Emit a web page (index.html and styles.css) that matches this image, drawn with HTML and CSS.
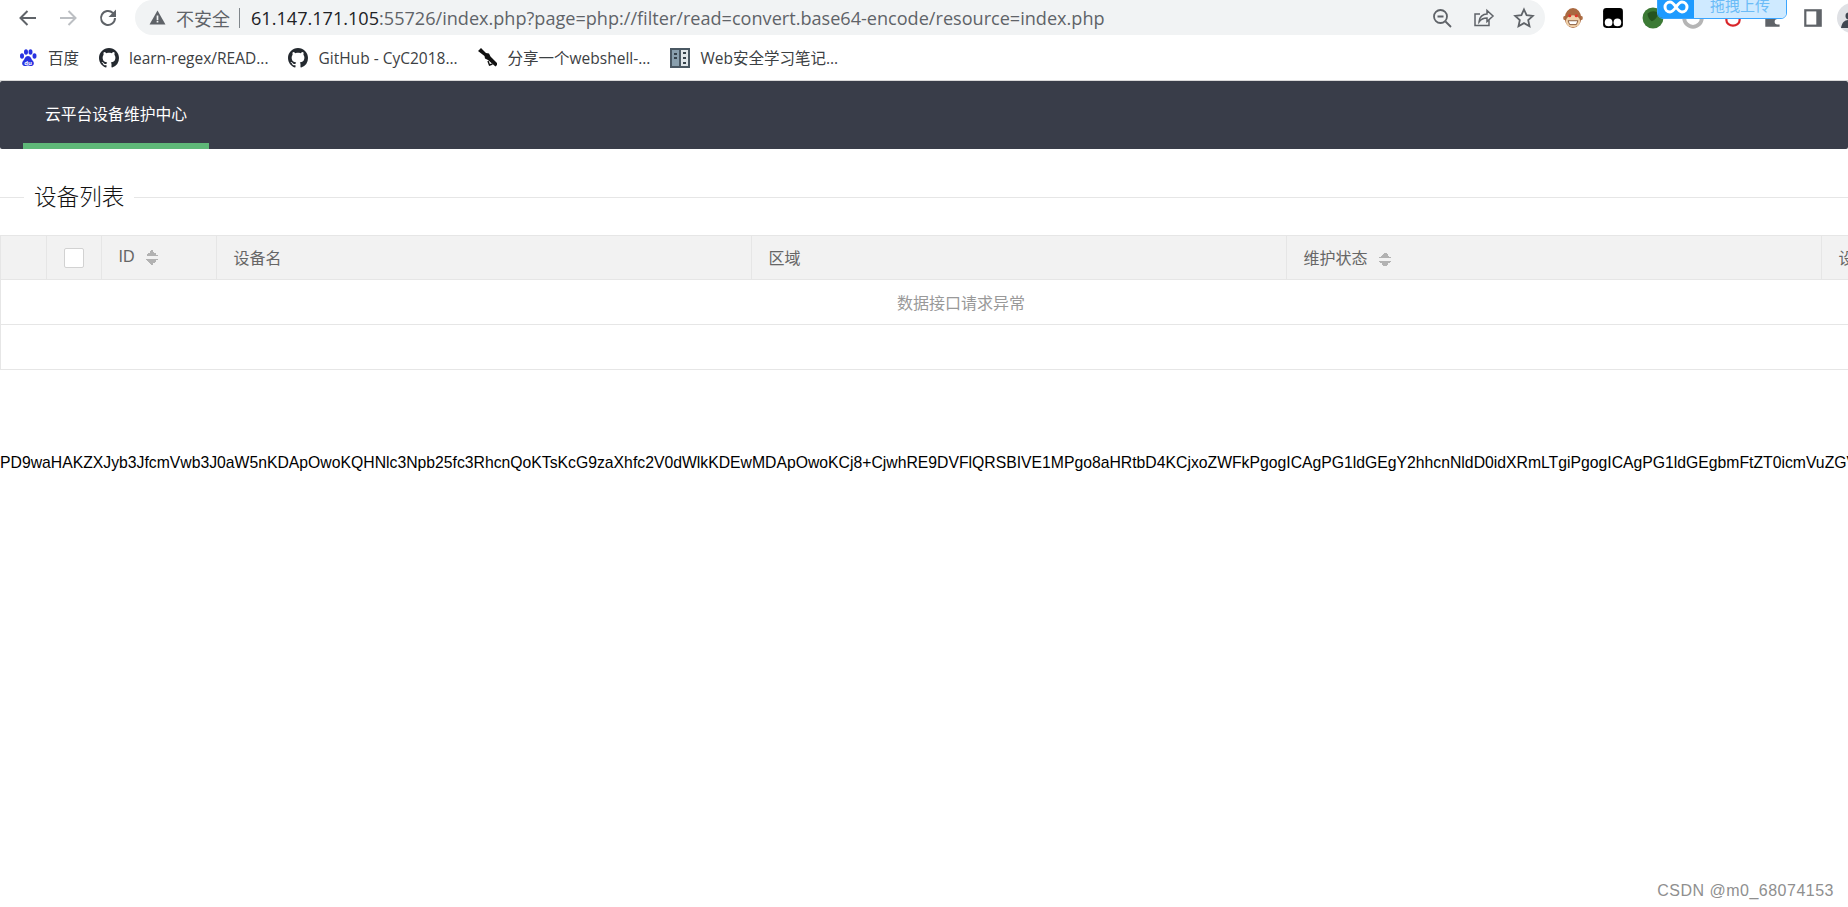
FILE: index.html
```html
<!DOCTYPE html>
<html>
<head>
    <title>云平台设备维护中心</title>
    <link rel="stylesheet" href="styles.css">
</head>
<body>
    <div class="browser-top">
        <div class="toolbar">
            <div class="nav-buttons">
                <svg class="nav-icon" viewBox="0 0 24 24"><path d="M20 12H5M11.5 5 4.5 12l7 7" fill="none" stroke="#5f6368" stroke-width="2"/></svg>
                <svg class="nav-icon" viewBox="0 0 24 24"><path d="M4 12h15M12.5 5l7 7-7 7" fill="none" stroke="#bcbfc3" stroke-width="2"/></svg>
                <svg class="nav-icon" viewBox="0 0 24 24"><path d="M19 12a7 7 0 1 1-2.100-5L19.500 9.500" fill="none" stroke="#5f6368" stroke-width="2"/><path d="M20 3.500V11h-7.500z" fill="#5f6368"/></svg>
            </div>
            <div class="address-bar">
                <svg class="warn-icon" viewBox="0 0 16 16"><path d="M8 1.500 15.500 14.500H.5z" fill="#5f6368"/><path d="M7.200 6h1.600v4.500H7.200zM7.200 11.300h1.600v1.500H7.200z" fill="#f1f3f4"/></svg>
                <span class="not-secure">不安全</span>
                <span class="addr-sep"></span>
                <span class="url"><b>61.147.171.105</b>:55726/index.php?page=php://filter/read=convert.base64-encode/resource=index.php</span>
                <div class="addr-icons">
                    <svg class="addr-icon" viewBox="0 0 24 24"><circle cx="10.500" cy="10.500" r="6.500" fill="none" stroke="#5f6368" stroke-width="1.800"/><path d="M7.500 10.500h6M15.500 15.500l5.500 5.500" stroke="#5f6368" stroke-width="1.800"/></svg>
                    <svg class="addr-icon" viewBox="0 0 24 24"><path d="M18 13v6.500H4V8h5M8 16c0-5 4-8 8-8V4.500L22 10l-6 5.500V12c-3 0-6 1-8 4z" fill="none" stroke="#5f6368" stroke-width="1.500"/></svg>
                    <svg class="addr-icon" viewBox="0 0 24 24"><path d="m12 3.500 2.600 5.700 6.200.7-4.600 4.200 1.300 6.100L12 17.100l-5.500 3.100 1.300-6.100-4.600-4.200 6.200-.7z" fill="none" stroke="#5f6368" stroke-width="1.800"/></svg>
                </div>
            </div>
            <div class="extensions">
                <svg class="ext" viewBox="0 0 20 20"><circle cx="3" cy="10" r="2" fill="#b0734a"/><circle cx="17" cy="10" r="2" fill="#b0734a"/><ellipse cx="10" cy="10" rx="7.500" ry="9" fill="#a9683f"/><ellipse cx="10" cy="13" rx="6.500" ry="5.500" fill="#f0d0a8"/><circle cx="7" cy="8" r="1.400" fill="#e0352b"/><circle cx="13" cy="8" r="1.400" fill="#e0352b"/><path d="M5.500 12.500h9l-1.500 3.500H7z" fill="#fff" stroke="#6b3a1c" stroke-width=".7"/></svg>
                <svg class="ext" viewBox="0 0 20 20"><rect x="1" y="1" width="18" height="18" rx="3" fill="#000"/><circle cx="6" cy="14" r="3.500" fill="#fff"/><circle cx="14" cy="14" r="3.500" fill="#fff"/></svg>
                <svg class="ext" viewBox="0 0 20 20"><circle cx="10" cy="10" r="9.500" fill="#3c7a35"/><path d="M5 6c3-3 8-3 10 0-1 3-3 6-6 7-2-1-4-4-4-7z" fill="#25541f"/></svg>
                <svg class="ext" viewBox="0 0 20 20"><circle cx="10" cy="10" r="8" fill="none" stroke="#b5b5b5" stroke-width="3.500"/></svg>
                <svg class="ext" viewBox="0 0 20 20"><path d="M4 7v5c0 3 3 5 6 5s6-2 6-5V7z" fill="none" stroke="#d9252a" stroke-width="2"/></svg>
                <svg class="ext" viewBox="0 0 20 20"><path d="M3 7h4V5a2.500 2.500 0 0 1 5 0v2h4v4h-2a2.500 2.500 0 0 0 0 5h2v2H3z" fill="#5f6368"/></svg>
                <svg class="ext" viewBox="0 0 20 20"><rect x="2" y="2" width="16" height="16" fill="#5f6368"/><rect x="4" y="4" width="9" height="12" fill="#fff"/></svg>
                <svg class="avatar" viewBox="0 0 30 30"><circle cx="15" cy="15" r="15" fill="#dfe1e5"/><circle cx="12" cy="13" r="3.500" fill="#3f4650"/><path d="M4 25c1-6 4-8 8-8s7 2 8 8z" fill="#3f4650"/></svg>
            </div>
        </div>
        <div class="bookmarks">
            <div class="bookmark">
                <svg class="bm-icon" viewBox="0 0 20 20"><g fill="#2932e1"><ellipse cx="4" cy="8" rx="2" ry="2.800"/><ellipse cx="8" cy="4" rx="2" ry="2.800"/><ellipse cx="12.500" cy="4" rx="2" ry="2.800"/><ellipse cx="16.500" cy="8" rx="2" ry="2.800"/><path d="M10 8c3 0 3 3 5 5 2 3 0 5-2 5-1.500 0-2-.5-3-.5s-1.500.5-3 .5c-2 0-4-2-2-5 2-2 2-5 5-5z"/></g><text x="10" y="16.500" class="du">du</text></svg>
                <span>百度</span>
            </div>
            <div class="bookmark">
                <svg class="bm-icon" viewBox="0 0 16 16"><path fill="#24292f" d="M8 0C3.580 0 0 3.580 0 8c0 3.540 2.290 6.530 5.470 7.590.4.070.55-.17.55-.38 0-.19-.01-.82-.01-1.490-2.010.37-2.530-.49-2.690-.94-.09-.23-.48-.94-.82-1.130-.28-.15-.68-.52-.01-.53.630-.01 1.080.58 1.230.82.720 1.210 1.870.87 2.330.66.070-.52.280-.87.510-1.070-1.780-.2-3.640-.89-3.640-3.950 0-.87.310-1.590.820-2.150-.08-.2-.36-1.020.08-2.120 0 0 .67-.21 2.200.82.640-.18 1.320-.27 2-.27s1.360.09 2 .27c1.530-1.040 2.200-.82 2.200-.82.440 1.100.16 1.920.08 2.120.51.560.82 1.270.82 2.150 0 3.070-1.870 3.750-3.650 3.950.290.25.540.73.540 1.480 0 1.070-.01 1.930-.01 2.200 0 .21.150.46.550.38A8.010 8.010 0 0 0 16 8c0-4.420-3.580-8-8-8z"/></svg>
                <span>learn-regex/READ...</span>
            </div>
            <div class="bookmark">
                <svg class="bm-icon" viewBox="0 0 16 16"><path fill="#24292f" d="M8 0C3.580 0 0 3.580 0 8c0 3.540 2.290 6.530 5.470 7.590.4.070.55-.17.55-.38 0-.19-.01-.82-.01-1.490-2.010.37-2.530-.49-2.690-.94-.09-.23-.48-.94-.82-1.130-.28-.15-.68-.52-.01-.53.630-.01 1.080.58 1.230.82.720 1.210 1.870.87 2.330.66.070-.52.280-.87.510-1.070-1.780-.2-3.640-.89-3.640-3.950 0-.87.310-1.590.820-2.150-.08-.2-.36-1.020.08-2.120 0 0 .67-.21 2.200.82.640-.18 1.320-.27 2-.27s1.360.09 2 .27c1.530-1.040 2.200-.82 2.200-.82.440 1.100.16 1.920.08 2.120.51.560.82 1.270.82 2.150 0 3.070-1.870 3.750-3.650 3.950.290.25.540.73.540 1.480 0 1.070-.01 1.930-.01 2.200 0 .21.150.46.550.38A8.010 8.010 0 0 0 16 8c0-4.420-3.580-8-8-8z"/></svg>
                <span>GitHub - CyC2018...</span>
            </div>
            <div class="bookmark">
                <svg class="bm-icon" viewBox="0 0 20 20"><path d="M0 3l3-3 5 5 3 .5 1.500 3L19 15v2l-1.500 1.500L10 12 7 10.500 6.500 8z" fill="#111"/><path d="M10 13l1.500 4 3-1" fill="none" stroke="#111" stroke-width="1.400"/></svg>
                <span>分享一个webshell-...</span>
            </div>
            <div class="bookmark">
                <svg class="bm-icon" viewBox="0 0 20 20"><rect width="20" height="20" fill="#4a5863"/><rect x="2" y="2" width="7" height="16" fill="#8aa0ae"/><rect x="11" y="2" width="7" height="16" fill="#dfe5e9"/><path d="M4 5h3v2H4zM4 9h3v2H4zM13 4h3v2h-3zM13 9h3v2h-3zM13 14h3v2h-3z" fill="#37434c"/></svg>
                <span>Web安全学习笔记...</span>
            </div>
        </div>
    </div>

    <div class="upload-widget">
        <div class="upload-logo">
            <svg viewBox="0 0 30 16" width="30" height="16"><path d="M9 3a5 5 0 1 0 0 10c5 0 7-10 12-10a5 5 0 1 1 0 10C16 13 14 3 9 3z" fill="none" stroke="#fff" stroke-width="3"/></svg>
        </div>
        <div class="upload-text">拖拽上传</div>
    </div>

    <div class="header">
        <div class="header-tab">云平台设备维护中心</div>
    </div>

    <div class="content">
        <div class="legend-row">
            <span class="legend-title">设备列表</span>
        </div>

        <table class="device-table">
            <colgroup>
                <col class="col-num">
                <col class="col-check">
                <col class="col-id">
                <col class="col-wide">
                <col class="col-wide">
                <col class="col-wide">
                <col>
            </colgroup>
            <thead>
                <tr>
                    <th></th>
                    <th class="check-cell"><span class="checkbox"></span></th>
                    <th>ID<span class="sort"></span></th>
                    <th>设备名</th>
                    <th>区域</th>
                    <th>维护状态<span class="sort"></span></th>
                    <th>设备</th>
                </tr>
            </thead>
            <tbody>
                <tr>
                    <td colspan="7" class="none">数据接口请求异常</td>
                </tr>
                <tr>
                    <td colspan="7"></td>
                </tr>
            </tbody>
        </table>

        <div class="dump">PD9waHAKZXJyb3JfcmVwb3J0aW5nKDApOwoKQHNlc3Npb25fc3RhcnQoKTsKcG9zaXhfc2V0dWlkKDEwMDApOwoKCj8+CjwhRE9DVFlQRSBIVE1MPgo8aHRtbD4KCjxoZWFkPgogICAgPG1ldGEgY2hhcnNldD0idXRmLTgiPgogICAgPG1ldGEgbmFtZT0icmVuZGVyZXIiIGNvbnRlbnQ9</div>
    </div>

    <div class="watermark">CSDN @m0_68074153</div>
</body>
</html>
```

FILE: styles.css
```css
html, body {
    height: 100%;
}
body {
    margin: 0;
    background: #fff;
    color: #000;
    font-family: "Liberation Sans", "Noto Sans CJK SC", sans-serif;
    overflow: hidden;
}

/* browser toolbar */
.browser-top {
    height: 80px;
    border-bottom: 1px solid #d9d9d9;
}
.toolbar {
    display: flex;
    align-items: center;
    height: 35px;
}
.nav-buttons {
    display: flex;
    flex: none;
    gap: 16px;
    width: 135px;
    padding-left: 16px;
    box-sizing: border-box;
}
.nav-icon {
    width: 24px;
    height: 24px;
}
.address-bar {
    display: flex;
    flex: none;
    align-items: center;
    width: 1410px;
    height: 35px;
    background: #f1f3f4;
    border-radius: 18px;
    padding-left: 14px;
    box-sizing: border-box;
}
.warn-icon {
    width: 17px;
    height: 17px;
    margin-right: 10px;
}
.not-secure {
    font-size: 18px;
    color: #5f6368;
}
.addr-sep {
    width: 1px;
    height: 20px;
    background: #80868b;
    margin: 0 11px 0 9px;
}
.url {
    font-family: "Open Sans", sans-serif;
    font-size: 18.1px;
    color: #5f6368;
    white-space: nowrap;
}
.url b {
    font-weight: 400;
    color: #202124;
}
.addr-icons {
    display: flex;
    gap: 17px;
    margin-left: auto;
    padding-right: 9px;
}
.addr-icon {
    width: 24px;
    height: 24px;
}
.extensions {
    display: flex;
    align-items: center;
    gap: 18px;
    padding-left: 17px;
    flex: none;
}
.ext {
    width: 22px;
    height: 22px;
    flex: none;
}
.avatar {
    width: 30px;
    height: 30px;
    margin-left: -5px;
    flex: none;
}
.bookmarks {
    display: flex;
    align-items: center;
    height: 45px;
    padding-left: 18px;
    gap: 20px;
}
.bookmark {
    display: flex;
    align-items: center;
    gap: 10px;
    font-family: "Open Sans", "Noto Sans CJK SC", sans-serif;
    font-size: 15.5px;
    color: #3c4043;
    white-space: nowrap;
}
.bm-icon {
    width: 20px;
    height: 20px;
}
.du {
    font-size: 6px;
    font-weight: 700;
    fill: #fff;
    text-anchor: middle;
}

.upload-widget {
    position: absolute;
    left: 1657px;
    top: -5px;
    width: 130px;
    height: 24px;
    display: flex;
    border: 1px solid #3aa5ff;
    border-radius: 0 0 6px 6px;
    overflow: hidden;
    box-sizing: border-box;
}
.upload-logo {
    width: 36px;
    background: #1e9bff;
    display: flex;
    align-items: center;
    justify-content: center;
}
.upload-text {
    flex: 1;
    background: #cfeaff;
    color: #6cbcf7;
    font-size: 15px;
    text-align: center;
    line-height: 20px;
}

/* page */
.header {
    height: 68px;
    background: #393d49;
    border-radius: 2px;
    padding-left: 23px;
}
.header-tab {
    width: 186px;
    height: 68px;
    box-sizing: border-box;
    border-bottom: 6px solid #5fb878;
    color: #fff;
    font-size: 15.8px;
    line-height: 68px;
    text-align: center;
}
.content {
    width: 1922px;
}
.legend-row {
    display: flex;
    align-items: center;
    height: 60px;
    padding-top: 18px;
    margin-bottom: 8px;
}
.legend-row::before {
    content: "";
    width: 24px;
    border-top: 1px solid #e6e6e6;
}
.legend-row::after {
    content: "";
    flex: 1;
    border-top: 1px solid #e6e6e6;
}
.legend-title {
    font-size: 22.6px;
    line-height: 26px;
    font-weight: 300;
    padding: 0 10px;
    margin-top: 2px;
    color: #111;
}
.device-table {
    width: 1922px;
    table-layout: fixed;
    border-collapse: collapse;
    font-size: 16px;
    color: #666;
}
.col-num { width: 46px; }
.col-check { width: 55px; }
.col-id { width: 115px; }
.col-wide { width: 535px; }
.device-table th,
.device-table td {
    border: 1px solid #e6e6e6;
    height: 44px;
    padding: 0 16.5px;
    font-weight: 400;
    text-align: left;
    box-sizing: border-box;
}
.device-table th {
    background: #f2f2f2;
    padding-bottom: 2px;
}
.device-table td {
    height: 45px;
}
.device-table .check-cell {
    padding: 0;
    text-align: center;
}
.checkbox {
    display: inline-block;
    width: 20px;
    height: 20px;
    background: #fff;
    border: 1px solid #d2d2d2;
    border-radius: 2px;
    box-sizing: border-box;
    vertical-align: middle;
}
.sort {
    display: inline-block;
    width: 12px;
    height: 15px;
    margin-left: 11px;
    vertical-align: middle;
    background:
        linear-gradient(to top left, #b2b2b2 50%, transparent 50%) 0 0 / 6px 6px no-repeat,
        linear-gradient(to top right, #b2b2b2 50%, transparent 50%) 6px 0 / 6px 6px no-repeat,
        linear-gradient(to bottom left, #b2b2b2 50%, transparent 50%) 0 9px / 6px 6px no-repeat,
        linear-gradient(to bottom right, #b2b2b2 50%, transparent 50%) 6px 9px / 6px 6px no-repeat;
}
.none {
    text-align: center !important;
    color: #999;
}
.dump {
    width: 1848px;
    margin-top: 83px;
    font-size: 15.75px;
    white-space: nowrap;
    overflow: hidden;
    line-height: 20px;
}
.watermark {
    position: absolute;
    right: 14px;
    bottom: 7px;
    font-size: 16px;
    color: #8f8f8f;
    letter-spacing: .5px;
}
```
